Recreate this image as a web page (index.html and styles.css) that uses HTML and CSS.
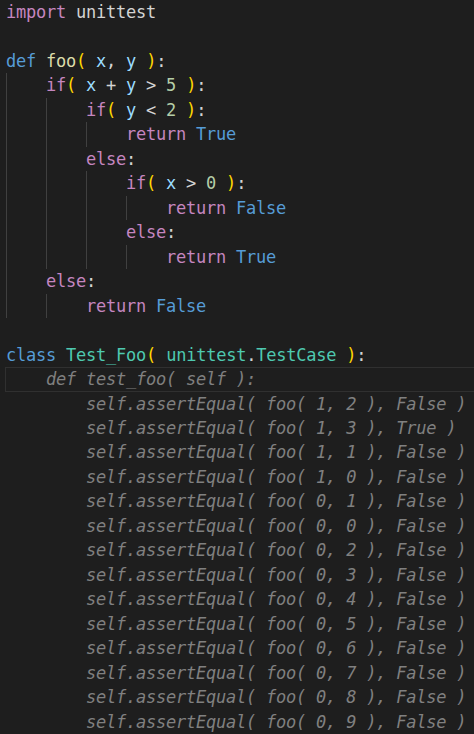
FILE: index.html
```html
<!DOCTYPE html>
<html>
<head>
<meta charset="utf-8">
<link rel="stylesheet" href="styles.css">
</head>
<body>
<div class="editor">
  <div class="line"><span class="kw">import</span> <span class="tx">unittest</span></div>
  <div class="line"></div>
  <div class="line"><span class="st">def</span> <span class="fn">foo</span><span class="br">(</span> <span class="pm">x</span>, <span class="pm">y</span> <span class="br">)</span>:</div>
  <div class="line"><span class="ind g"></span><span class="kw">if</span><span class="br">(</span> <span class="pm">x</span> + <span class="pm">y</span> &gt; <span class="nm">5</span> <span class="br">)</span>:</div>
  <div class="line"><span class="ind g"></span><span class="ind g"></span><span class="kw">if</span><span class="br">(</span> <span class="pm">y</span> &lt; <span class="nm">2</span> <span class="br">)</span>:</div>
  <div class="line"><span class="ind g"></span><span class="ind g"></span><span class="ind g"></span><span class="kw">return</span> <span class="st">True</span></div>
  <div class="line"><span class="ind g"></span><span class="ind g"></span><span class="kw">else</span>:</div>
  <div class="line"><span class="ind g"></span><span class="ind g"></span><span class="ind g"></span><span class="kw">if</span><span class="br">(</span> <span class="pm">x</span> &gt; <span class="nm">0</span> <span class="br">)</span>:</div>
  <div class="line"><span class="ind g"></span><span class="ind g"></span><span class="ind g"></span><span class="ind g"></span><span class="kw">return</span> <span class="st">False</span></div>
  <div class="line"><span class="ind g"></span><span class="ind g"></span><span class="ind g"></span><span class="kw">else</span>:</div>
  <div class="line"><span class="ind g"></span><span class="ind g"></span><span class="ind g"></span><span class="ind g"></span><span class="kw">return</span> <span class="st">True</span></div>
  <div class="line"><span class="ind g"></span><span class="kw">else</span>:</div>
  <div class="line"><span class="ind g"></span><span class="ind g"></span><span class="kw">return</span> <span class="st">False</span></div>
  <div class="line"></div>
  <div class="line"><span class="st">class</span> <span class="cl">Test_Foo</span><span class="br">(</span> <span class="cl">unittest</span>.<span class="cl">TestCase</span> <span class="br">)</span>:</div>
  <div class="line current dim"><span class="ind"></span>def test_foo( self ):</div>
  <div class="line dim"><span class="ind"></span><span class="ind"></span>self.assertEqual( foo( 1, 2 ), False )</div>
  <div class="line dim"><span class="ind"></span><span class="ind"></span>self.assertEqual( foo( 1, 3 ), True )</div>
  <div class="line dim"><span class="ind"></span><span class="ind"></span>self.assertEqual( foo( 1, 1 ), False )</div>
  <div class="line dim"><span class="ind"></span><span class="ind"></span>self.assertEqual( foo( 1, 0 ), False )</div>
  <div class="line dim"><span class="ind"></span><span class="ind"></span>self.assertEqual( foo( 0, 1 ), False )</div>
  <div class="line dim"><span class="ind"></span><span class="ind"></span>self.assertEqual( foo( 0, 0 ), False )</div>
  <div class="line dim"><span class="ind"></span><span class="ind"></span>self.assertEqual( foo( 0, 2 ), False )</div>
  <div class="line dim"><span class="ind"></span><span class="ind"></span>self.assertEqual( foo( 0, 3 ), False )</div>
  <div class="line dim"><span class="ind"></span><span class="ind"></span>self.assertEqual( foo( 0, 4 ), False )</div>
  <div class="line dim"><span class="ind"></span><span class="ind"></span>self.assertEqual( foo( 0, 5 ), False )</div>
  <div class="line dim"><span class="ind"></span><span class="ind"></span>self.assertEqual( foo( 0, 6 ), False )</div>
  <div class="line dim"><span class="ind"></span><span class="ind"></span>self.assertEqual( foo( 0, 7 ), False )</div>
  <div class="line dim"><span class="ind"></span><span class="ind"></span>self.assertEqual( foo( 0, 8 ), False )</div>
  <div class="line dim"><span class="ind"></span><span class="ind"></span>self.assertEqual( foo( 0, 9 ), False )</div>
</div>
</body>
</html>
```
FILE: styles.css
```css
html, body {
  margin: 0;
  padding: 0;
  background: #1e1e1e;
  overflow: hidden;
}
.editor {
  padding-left: 6px;
  font-family: "DejaVu Sans Mono", "Liberation Mono", monospace;
  font-size: 17px;
  letter-spacing: -0.23px;
  color: #d4d4d4;
}
.line {
  height: 24.47px;
  line-height: 24.47px;
  white-space: pre;
  overflow: visible;
}
.ind {
  display: inline-block;
  width: 40px;
  height: 24.47px;
  vertical-align: top;
  box-sizing: border-box;
}
.ind.g {
  border-left: 1px solid #404040;
}
.current {
  border: 1px solid #303030;
  border-right: none;
  box-sizing: border-box;
  line-height: 22.47px;
  margin-left: -1px;
}
.current .ind {
  height: 22.47px;
}
.dim {
  color: #808080;
  font-style: italic;
}
.kw { color: #c586c0; }
.st { color: #569cd6; }
.fn { color: #dcdcaa; }
.br { color: #ffd700; }
.pm { color: #9cdcfe; }
.nm { color: #b5cea8; }
.cl { color: #4ec9b0; }
.tx { color: #d4d4d4; }
```
